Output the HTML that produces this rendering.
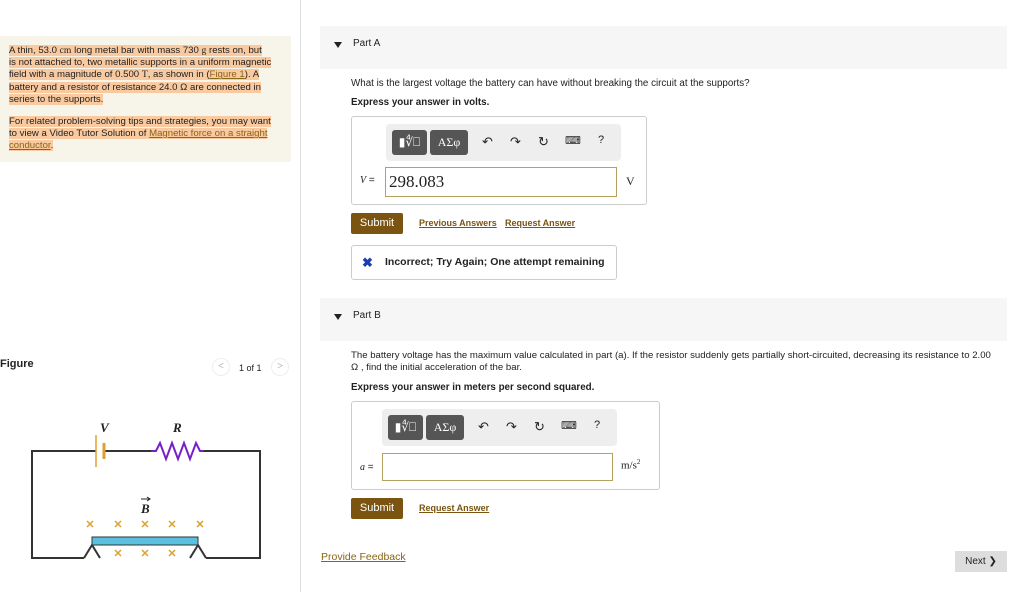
<!DOCTYPE html>
<html><head><meta charset="utf-8"><style>
*{margin:0;padding:0;box-sizing:border-box}
body{width:1024px;height:592px;background:#fff;font-family:"Liberation Sans",sans-serif;color:#222;position:relative;overflow:hidden;font-size:9px}
.a{position:absolute}
.hl{background:#f9c9a0}
.lk{color:#8a6515;text-decoration:underline}
.hdr{position:absolute;left:320px;width:687px;height:43px;background:#f6f6f6}
.tri{position:absolute;left:14px;top:16px;width:0;height:0;border-left:4px solid transparent;border-right:4px solid transparent;border-top:6px solid #222}
.box{position:absolute;border:1px solid #ccc;border-radius:3px;background:#fff}
.tb{position:absolute;background:#eee;border-radius:4px}
.btn{position:absolute;top:6px;height:25px;background:#555;border-radius:3px;color:#fff;font-family:"Liberation Serif",serif;font-size:12px;text-align:center;line-height:25px}
.ic{position:absolute;top:10px;font-size:13px;color:#222}
.inp{position:absolute;border:1px solid #b8a060;background:#fff}
.sub{position:absolute;left:351px;width:52px;height:21px;background:#7a5410;color:#fff;font-size:11px;text-align:center;line-height:21px;border-radius:2px}
.bl{font-weight:bold;font-size:9px;color:#7a5410;text-decoration:underline}
.sr{font-family:'Liberation Serif',serif}
</style></head><body>
<div class="a" style="left:300px;top:0;width:1px;height:592px;background:#ddd"></div>
<div class="a" style="left:0;top:36px;width:291px;height:126px;background:#f7f5ea"></div>
<div class="a" style="left:9px;top:45px;white-space:nowrap;font-size:9.6px;line-height:12.2px"><span class="hl">A thin, 53.0 <span class="sr">cm</span> long metal bar with mass 730 <span class="sr">g</span> rests on, but<br>is not attached to, two metallic supports in a uniform magnetic<br>field with a magnitude of 0.500 <span class="sr">T</span>, as shown in (<span class="lk">Figure 1</span>). A<br>battery and a resistor of resistance 24.0 Ω are connected in<br>series to the supports.</span></div>
<div class="a" style="left:9px;top:116px;white-space:nowrap;font-size:9.6px;line-height:12.2px"><span class="hl">For related problem-solving tips and strategies, you may want<br>to view a Video Tutor Solution of <span class="lk">Magnetic force on a straight</span><br><span class="lk">conductor</span>.</span></div>

<div class="a" style="left:0;top:358px;font-size:11px;font-weight:bold">Figure</div>
<div class="a" style="left:212px;top:358px;width:18px;height:18px;border:1px solid #eee;border-radius:50%;color:#bbb;text-align:center;line-height:16px;font-size:10px">&lt;</div>
<div class="a" style="left:239px;top:363px;font-size:9px">1 of 1</div>
<div class="a" style="left:271px;top:358px;width:18px;height:18px;border:1px solid #eee;border-radius:50%;color:#bbb;text-align:center;line-height:16px;font-size:10px">&gt;</div>
<svg class="a" style="left:0;top:410px" width="300" height="160" viewBox="0 410 300 160">
<g fill="none" stroke="#333" stroke-width="2">
<polyline points="96,451 32,451 32,558 84,558"/>
<polyline points="104,451 151,451"/>
<polyline points="204,451 260,451 260,558 206,558"/>
<polyline points="84,558 92,545 100,558"/>
<polyline points="190,558 198,545 206,558"/>
</g>
<line x1="96" y1="435" x2="96" y2="467" stroke="#e0a030" stroke-width="1.5"/>
<line x1="104" y1="443" x2="104" y2="459" stroke="#e0a030" stroke-width="3"/>
<polyline points="151,451 156,451 160,443 166,459 172,443 178,459 184,443 190,459 196,443 200,451 204,451" fill="none" stroke="#7a1fc8" stroke-width="2"/>
<rect x="92" y="537" width="106" height="8" fill="#5bc0e0" stroke="#333" stroke-width="1"/>
<g stroke="#e0a030" stroke-width="1.5">
<path d="M87,521l6,6M93,521l-6,6M115,521l6,6M121,521l-6,6M142,521l6,6M148,521l-6,6M169,521l6,6M175,521l-6,6M197,521l6,6M203,521l-6,6M115,550l6,6M121,550l-6,6M142,550l6,6M148,550l-6,6M169,550l6,6M175,550l-6,6"/>
</g>
<text x="100" y="432" font-family="Liberation Serif" font-style="italic" font-weight="bold" font-size="13" fill="#222">V</text>
<text x="173" y="432" font-family="Liberation Serif" font-style="italic" font-weight="bold" font-size="13" fill="#222">R</text>
<text x="141" y="513" font-family="Liberation Serif" font-style="italic" font-weight="bold" font-size="13" fill="#222">B</text>
<path d="M141,499h9M147,497l3,2-3,2" stroke="#222" fill="none"/>
</svg>

<div class="hdr" style="top:26px"><div class="tri"></div><div class="a" style="left:33px;top:12px;font-size:10px">Part A</div></div>
<div class="a" style="left:351px;top:78px;font-size:9.8px">What is the largest voltage the battery can have without breaking the circuit at the supports?</div>
<div class="a" style="left:351px;top:97px;font-size:9.8px;font-weight:bold">Express your answer in volts.</div>
<div class="box" style="left:351px;top:116px;width:296px;height:89px">
<div class="tb" style="left:34px;top:7px;width:235px;height:37px">
<div class="btn" style="left:6px;width:35px">▮∜⎕</div><div class="btn" style="left:44px;width:38px">ΑΣφ</div>
<div class="ic" style="left:96px">↶</div><div class="ic" style="left:124px">↷</div><div class="ic" style="left:152px">↻</div><div class="ic" style="left:179px;font-size:11px">⌨</div><div class="ic" style="left:212px;font-size:11px">?</div></div>
<div class="a" style="left:8px;top:58px;font-size:10px"><i class="sr">V</i> =</div>
<div class="inp" style="left:33px;top:50px;width:232px;height:30px;font-family:'Liberation Serif',serif;font-size:17px;padding:4px 0 0 3px">298.083</div>
<div class="a" style="left:274px;top:57px;font-family:'Liberation Serif',serif;font-size:12px">V</div>
</div>
<div class="sub" style="top:213px">Submit</div>
<div class="a bl" style="left:419px;top:218px">Previous Answers</div>
<div class="a bl" style="left:505px;top:218px">Request Answer</div>
<div class="box" style="left:351px;top:245px;width:266px;height:35px"><div class="a" style="left:10px;top:9px;color:#1a3fb0;font-size:13px;font-weight:bold">✖</div><div class="a" style="left:33px;top:10px;font-size:10.5px;font-weight:bold">Incorrect; Try Again; One attempt remaining</div></div>

<div class="hdr" style="top:298px"><div class="tri"></div><div class="a" style="left:33px;top:12px;font-size:10px">Part B</div></div>
<div class="a" style="left:351px;top:350px;white-space:nowrap;font-size:9.6px;line-height:12px">The battery voltage has the maximum value calculated in part (a). If the resistor suddenly gets partially short-circuited, decreasing its resistance to 2.00<br>Ω , find the initial acceleration of the bar.</div>
<div class="a" style="left:351px;top:382px;font-size:9.8px;font-weight:bold">Express your answer in meters per second squared.</div>
<div class="box" style="left:351px;top:401px;width:309px;height:89px">
<div class="tb" style="left:30px;top:7px;width:235px;height:37px">
<div class="btn" style="left:6px;width:35px">▮∜⎕</div><div class="btn" style="left:44px;width:38px">ΑΣφ</div>
<div class="ic" style="left:96px">↶</div><div class="ic" style="left:124px">↷</div><div class="ic" style="left:152px">↻</div><div class="ic" style="left:179px;font-size:11px">⌨</div><div class="ic" style="left:212px;font-size:11px">?</div></div>
<div class="a" style="left:8px;top:60px;font-size:10px"><i class="sr">a</i> =</div>
<div class="inp" style="left:30px;top:51px;width:231px;height:28px"></div>
<div class="a" style="left:269px;top:56px;font-family:'Liberation Serif',serif;font-size:11px">m/s<sup style="font-size:7px">2</sup></div>
</div>
<div class="sub" style="top:498px">Submit</div>
<div class="a bl" style="left:419px;top:503px">Request Answer</div>
<div class="a lk" style="left:321px;top:551px;font-size:10.5px">Provide Feedback</div>
<div class="a" style="left:955px;top:551px;width:52px;height:21px;background:#ddd;font-size:10px;text-align:center;line-height:21px">Next ❯</div>
</body></html>
